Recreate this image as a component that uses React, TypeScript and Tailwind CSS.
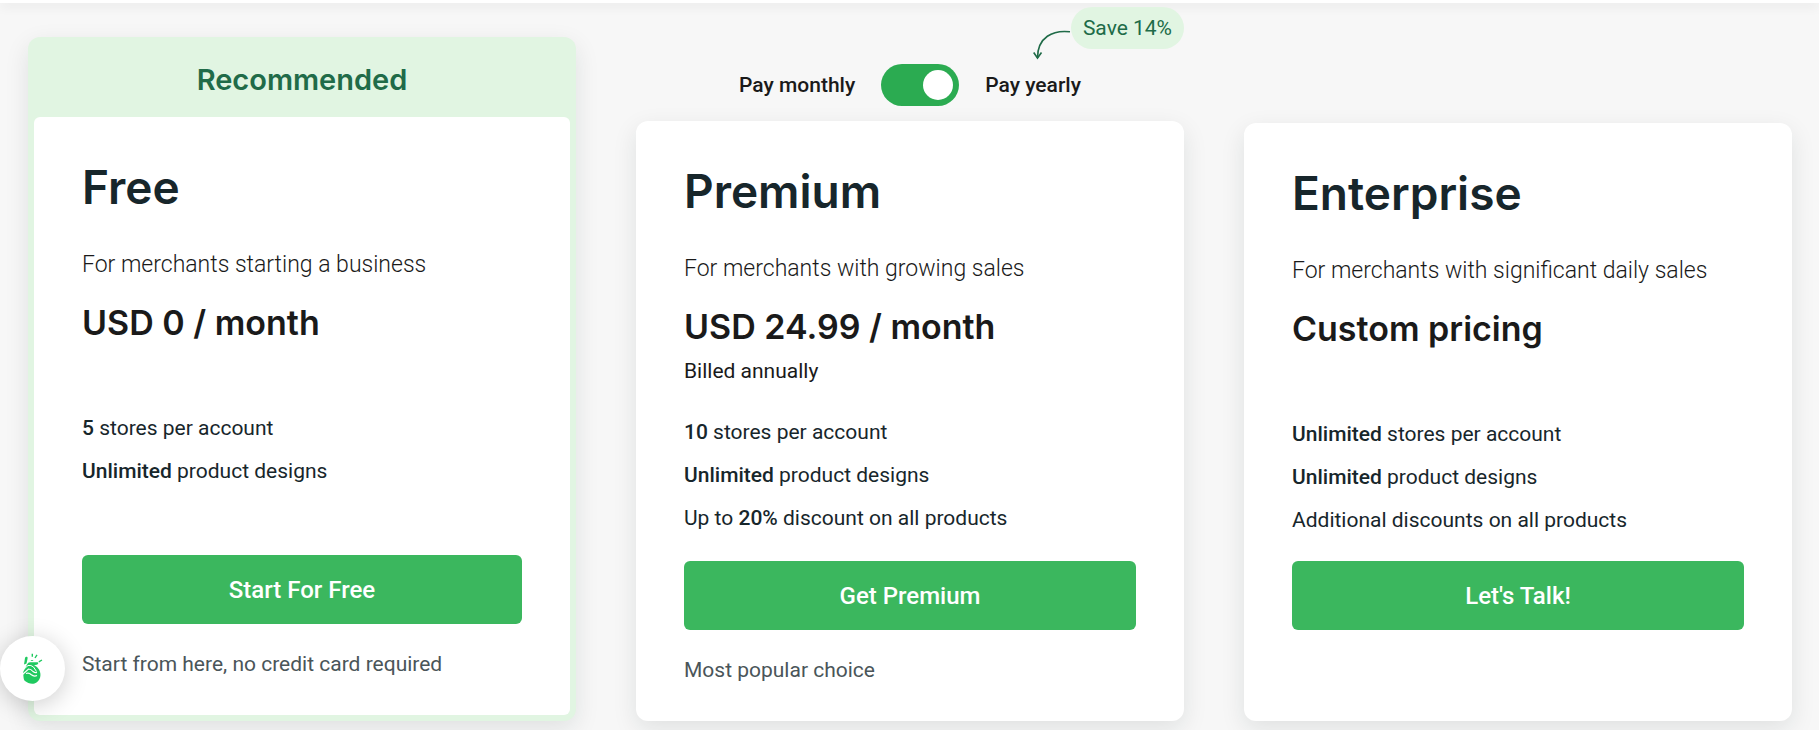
import { useState } from 'react'
import type { ReactNode } from 'react'

interface Plan {
  name: string
  audience: string
  price: string
  billing?: string
  features: ReactNode[]
  cta: string
  note?: string
}

const Strong = ({ children }: { children: ReactNode }) => (
  <strong className="font-medium">{children}</strong>
)

const freePlan: Plan = {
  name: 'Free',
  audience: 'For merchants starting a business',
  price: 'USD 0 / month',
  features: [
    <><Strong>5</Strong> stores per account</>,
    <><Strong>Unlimited</Strong> product designs</>,
  ],
  cta: 'Start For Free',
  note: 'Start from here, no credit card required',
}

const premiumPlan: Plan = {
  name: 'Premium',
  audience: 'For merchants with growing sales',
  price: 'USD 24.99 / month',
  billing: 'Billed annually',
  features: [
    <><Strong>10</Strong> stores per account</>,
    <><Strong>Unlimited</Strong> product designs</>,
    <>Up to <Strong>20%</Strong> discount on all products</>,
  ],
  cta: 'Get Premium',
  note: 'Most popular choice',
}

const enterprisePlan: Plan = {
  name: 'Enterprise',
  audience: 'For merchants with significant daily sales',
  price: 'Custom pricing',
  features: [
    <><Strong>Unlimited</Strong> stores per account</>,
    <><Strong>Unlimited</Strong> product designs</>,
    'Additional discounts on all products',
  ],
  cta: "Let's Talk!",
}

const PlanBody = ({ plan }: { plan: Plan }) => (
  <div className="flex flex-1 flex-col px-12 pt-10 pb-[37px]">
    <h2 className="font-['Inter',sans-serif] text-[46px] leading-[60px] font-semibold text-[#17262b]">
      {plan.name}
    </h2>
    <p className="mt-8 text-[23px] leading-8 font-light">{plan.audience}</p>
    <div className="mt-5 min-h-[113px]">
      <p className="font-['Inter',sans-serif] text-[34px] leading-[44px] font-semibold">{plan.price}</p>
      {plan.billing && <p className="mt-2 text-[21px] leading-7">{plan.billing}</p>}
    </div>
    <ul className="flex min-h-[114px] flex-1 flex-col gap-[15px] text-[21px] leading-7 text-[#17262b]">
      {plan.features.map((feature, i) => (
        <li key={i}>{feature}</li>
      ))}
    </ul>
    <button
      type="button"
      className="mt-[27px] h-[69px] w-full cursor-pointer rounded-md bg-[#3bb75e] text-2xl font-medium text-white"
    >
      {plan.cta}
    </button>
    <p className="mt-[26px] min-h-7 text-[21px] leading-7 text-[#4a5559]">{plan.note}</p>
  </div>
)

const BillingToggle = () => {
  const [yearly, setYearly] = useState(true)

  return (
    <div className="relative mb-[15px] flex items-center justify-center gap-[26px] text-[21px] leading-7 font-medium">
      <span>Pay monthly</span>
      <button
        type="button"
        role="switch"
        aria-checked={yearly}
        aria-label="Pay yearly"
        onClick={() => setYearly(!yearly)}
        className={`flex h-[42px] w-[78px] cursor-pointer items-center rounded-full bg-[#2bab51] px-1.5 ${
          yearly ? 'justify-end' : 'justify-start'
        }`}
      >
        <span className="size-[30px] rounded-full bg-white" />
      </button>
      <span>Pay yearly</span>

      {/* Discount badge */}
      <div className="absolute right-0 bottom-[57px] flex items-end">
        <svg width="38" height="30" viewBox="0 0 38 30" fill="none" stroke="#206b48" strokeWidth="1.6" className="-mb-[11px]">
          <path d="M37 1.800C20 -0.200 4.500 7 4.500 28" />
          <path d="M0.700 22.500L4.500 28L8.500 22.500" />
        </svg>
        <span className="rounded-full bg-[#e1f5e2] px-3 py-[7px] font-normal text-[#206b48]">
          Save 14%
        </span>
      </div>
    </div>
  )
}

const HandIcon = () => (
  <svg width="22" height="32" viewBox="0 0 22 32" fill="none">
    {/* Fingers and palm */}
    <path d="M2 11.500L3 5Q3.500 3.300 5 3.800Q6 4.300 5.500 6L4.500 10.500Z" fill="#1fc95f" />
    <path d="M8.500 8Q10 6 11.500 8Z" fill="#1fc95f" />
    <path d="M5 11.500Q6 9.300 8 9.300H15.500Q17 9.500 16 11Q15 12.300 12 12Q15.500 13.500 17 16.500C20 22 18 27 14.500 29.500C11 32 6 30.500 3 28C1.500 26.500 1.500 24.500 1.200 19Z" fill="#1fc95f" />
    {/* Creases */}
    <path d="M0.500 17.500L6 12.500Q9 11.800 11.500 14L14.500 18.500" stroke="#fff" strokeWidth="1" />
    <path d="M0.500 21.500L6.500 16Q9 16 11 18.500Q13 20 15 19.500" stroke="#fff" strokeWidth="1.200" />
    <path d="M4 20.500Q7 19.500 9 21.500Q12 24 15 22.500" stroke="#fff" strokeWidth="1.200" />
    {/* Snap rays */}
    <path d="M10.300 0.800V3.800M15 1.800L13 5M20 7L16.800 8.800" stroke="#1fc95f" strokeWidth="1.400" />
  </svg>
)

const cardShadow = 'shadow-[0_8px_24px_rgba(23,38,43,0.1)]'

export default function App() {
  return (
    <div className="min-h-screen bg-[#f7f7f7] font-['Roboto',sans-serif] text-[#1a1a1a]">
      <header className="h-[3px] bg-white shadow-[0_2px_12px_rgba(0,0,0,0.14)]" />

      <main className="grid grid-cols-3 items-end gap-[60px] pt-[34px] pr-[27px] pb-2 pl-7">
        <section className={`rounded-xl bg-[#e1f5e2] px-1.5 pb-1.5 ${cardShadow}`}>
          <p className="pt-[23px] pb-[17px] text-center font-['Inter',sans-serif] text-[29px] leading-10 font-semibold text-[#206b48]">
            Recommended
          </p>
          <div className="rounded-md bg-white">
            <PlanBody plan={freePlan} />
          </div>
        </section>

        <div>
          <BillingToggle />
          <section className={`flex min-h-[600px] flex-col rounded-xl bg-white ${cardShadow}`}>
            <PlanBody plan={premiumPlan} />
          </section>
        </div>

        <section className={`rounded-xl bg-white ${cardShadow}`}>
          <PlanBody plan={enterprisePlan} />
        </section>
      </main>

      <button
        type="button"
        aria-label="Open widget"
        className="fixed bottom-[29px] left-0 flex size-[65px] cursor-pointer items-center justify-center rounded-full bg-white shadow-[0_4px_24px_rgba(0,0,0,0.2)]"
      >
        <HandIcon />
      </button>
    </div>
  )
}
